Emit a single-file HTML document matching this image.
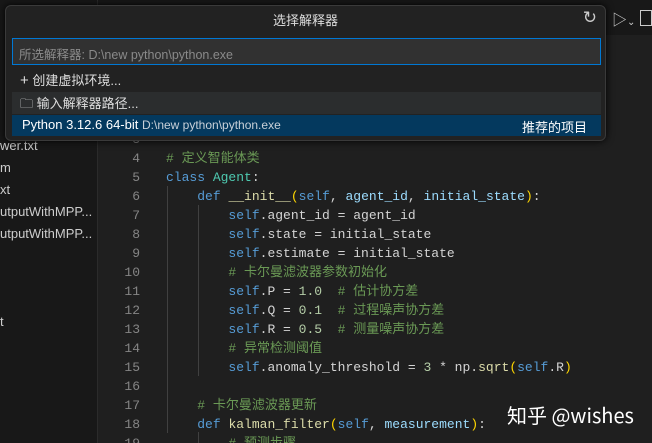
<!DOCTYPE html>
<html><head><meta charset="utf-8"><style>
*{margin:0;padding:0;box-sizing:border-box}
html{width:652px;height:443px;overflow:hidden}
body{width:652px;height:443px;background:#1f1f1f;position:relative;overflow:hidden;font-family:"Liberation Sans","Noto Sans CJK SC",sans-serif;color:#ccc}
.side{position:absolute;left:0;top:0;width:98px;height:443px;background:#181818;border-right:1px solid #2b2b2b}
.side div{position:absolute;left:0;font-size:13px;color:#ccc;white-space:nowrap}
.top{position:absolute;left:98px;top:0;right:0;height:35px;background:#181818}
.ln{position:absolute;left:100px;width:40px;text-align:right;font:13px/19px "Liberation Mono",monospace;color:#858585;height:19px}
.cd{position:absolute;left:166px;font:13px/19px "Liberation Mono","Noto Sans CJK SC",monospace;color:#d4d4d4;white-space:pre;height:19px;overflow:visible}
.c{color:#6a9955}.k{color:#569cd6}.t{color:#4ec9b0}.f{color:#dcdcaa}.p{color:#9cdcfe}.n{color:#b5cea8}.y{color:#ffd700}
.g{position:absolute;width:1px;background:#404040}
.dlg{position:absolute;left:5px;top:5px;width:601px;height:136px;background:#222222;border:1px solid #3a3a3a;border-radius:6px;box-shadow:0 0 8px #000}
</style></head><body>
<div class="top"></div>
<div style="position:absolute;left:612px;top:9px;font-size:15px;color:#ccc">▷<span style="font-size:10px">⌄</span></div>
<div style="position:absolute;left:640px;top:10px;width:12px;height:16px;border:1.5px solid #ccc"></div>
<div class="side">
<div style="top:138px">wer.txt</div><div style="top:160px">m</div><div style="top:182px">xt</div>
<div style="top:204px">utputWithMPP...</div><div style="top:226px">utputWithMPP...</div><div style="top:314px">t</div>
</div>
<div class="g" style="left:167px;top:186px;height:247px"></div>
<div class="g" style="left:198px;top:205px;height:171px"></div>
<div class="g" style="left:198px;top:432px;height:11px"></div>
<div class="ln" style="top:130px">3</div><div class="ln" style="top:149px">4</div><div class="ln" style="top:168px">5</div><div class="ln" style="top:187px">6</div><div class="ln" style="top:206px">7</div><div class="ln" style="top:225px">8</div><div class="ln" style="top:244px">9</div><div class="ln" style="top:263px">10</div><div class="ln" style="top:282px">11</div><div class="ln" style="top:301px">12</div><div class="ln" style="top:320px">13</div><div class="ln" style="top:339px">14</div><div class="ln" style="top:358px">15</div><div class="ln" style="top:377px">16</div><div class="ln" style="top:396px">17</div><div class="ln" style="top:415px">18</div><div class="ln" style="top:434px">19</div>
<div class="cd" style="top:149px"><span class="c"># 定义智能体类</span></div>
<div class="cd" style="top:168px"><span class="k">class</span> <span class="t">Agent</span>:</div>
<div class="cd" style="top:187px">    <span class="k">def</span> <span class="f">__init__</span><span class="y">(</span><span class="k">self</span>, <span class="p">agent_id</span>, <span class="p">initial_state</span><span class="y">)</span>:</div>
<div class="cd" style="top:206px">        <span class="k">self</span>.agent_id = agent_id</div>
<div class="cd" style="top:225px">        <span class="k">self</span>.state = initial_state</div>
<div class="cd" style="top:244px">        <span class="k">self</span>.estimate = initial_state</div>
<div class="cd" style="top:263px">        <span class="c"># 卡尔曼滤波器参数初始化</span></div>
<div class="cd" style="top:282px">        <span class="k">self</span>.P = <span class="n">1.0</span>  <span class="c"># 估计协方差</span></div>
<div class="cd" style="top:301px">        <span class="k">self</span>.Q = <span class="n">0.1</span>  <span class="c"># 过程噪声协方差</span></div>
<div class="cd" style="top:320px">        <span class="k">self</span>.R = <span class="n">0.5</span>  <span class="c"># 测量噪声协方差</span></div>
<div class="cd" style="top:339px">        <span class="c"># 异常检测阈值</span></div>
<div class="cd" style="top:358px">        <span class="k">self</span>.anomaly_threshold = <span class="n">3</span> * np.<span class="f">sqrt</span><span class="y">(</span><span class="k">self</span>.R<span class="y">)</span></div>
<div class="cd" style="top:396px">    <span class="c"># 卡尔曼滤波器更新</span></div>
<div class="cd" style="top:415px">    <span class="k">def</span> <span class="f">kalman_filter</span><span class="y">(</span><span class="k">self</span>, <span class="p">measurement</span><span class="y">)</span>:</div>
<div class="cd" style="top:434px">        <span class="c"># 预测步骤</span></div>
<div style="position:absolute;left:507px;top:400px;font-size:20px;color:#fff;font-family:'Noto Sans CJK SC','Liberation Sans',sans-serif">知乎 @wishes</div>
<div class="dlg">
<div style="position:absolute;left:0;right:0;top:4px;text-align:center;font-size:13px;color:#ddd">选择解释器</div>
<div style="position:absolute;right:8px;top:2px;font-size:17px;color:#ccc">↻</div>
<div style="position:absolute;left:6px;top:32px;width:589px;height:27px;border:1px solid #0078d4;background:#313131;font-size:12.5px;color:#8a8a8a;padding:5px 6px">所选解释器: D:\new python\python.exe</div>
<div style="position:absolute;left:6px;top:63px;width:589px;height:22px;font-size:13px;color:#ddd;padding:1px 8px"><span style="font-size:15px">+</span> 创建虚拟环境...</div>
<div style="position:absolute;left:6px;top:86px;width:589px;height:22px;background:#2b2d2e;font-size:13px;color:#ddd;padding:1px 8px">🗀 输入解释器路径...</div>
<div style="position:absolute;left:6px;top:109px;width:589px;height:21px;background:#04395e;font-size:13px;color:#fff;padding:2px 10px">Python 3.12.6 64-bit <span style="font-size:12px;color:#c8d0d8">D:\new python\python.exe</span><span style="position:absolute;right:14px;top:2px">推荐的项目</span></div>
</div>
</body></html>
